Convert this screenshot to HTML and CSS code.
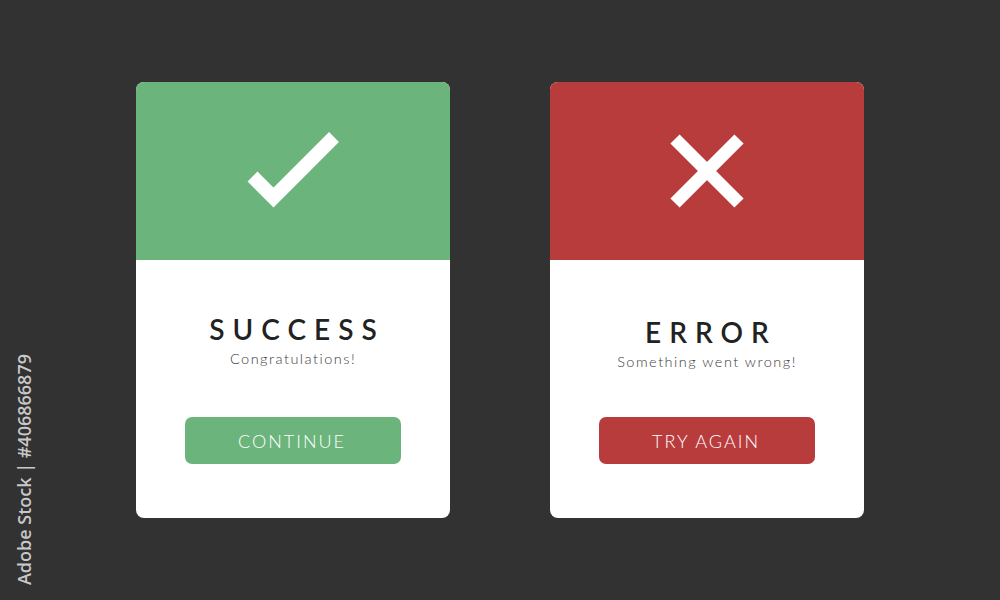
FILE: index.html
```html
<!DOCTYPE html>
<html lang="en">
<head>
    <meta charset="UTF-8">
    <meta name="viewport" content="width=device-width, initial-scale=1.0">
    <title>Alerts</title>

    <link rel="stylesheet" href="styles.css">
</head>
<body>
    <!-- tarjetas -->

    <div class="alerts">
        <div class="card">
            <div class="cardHeader success">
                <svg class="icon" width="100" height="100" viewBox="0 0 100 100">
                    <polyline points="9.5,55.5 30.5,76.5 91,16" fill="none" stroke="#fff" stroke-width="14" stroke-linejoin="miter"/>
                </svg>
            </div>
            <div class="cardBody">
                <h2 class="title">SUCCESS</h2>
                <p class="message">Congratulations!</p>
                <button class="btn successBtn">CONTINUE</button>
            </div>
        </div>

        <div class="card">
            <div class="cardHeader error">
                <svg class="icon" width="100" height="100" viewBox="0 0 100 100">
                    <line x1="18" y1="18" x2="82" y2="82" stroke="#fff" stroke-width="13"/>
                    <line x1="82" y1="18" x2="18" y2="82" stroke="#fff" stroke-width="13"/>
                </svg>
            </div>
            <div class="cardBody">
                <h2 class="title errorTitle">ERROR</h2>
                <p class="message">Something went wrong!</p>
                <button class="btn errorBtn">TRY AGAIN</button>
            </div>
        </div>
    </div>

    <div class="stockId">Adobe Stock | #406866879</div>
</body>
</html>
```

FILE: styles.css
```css
body {
    margin: 0;
    height: 600px;
    background-color: #323232;
    font-family: Lato, "Open Sans", sans-serif;
    overflow: hidden;
}

.alerts {
    display: flex;
    justify-content: center;
    align-items: center;
    gap: 100px;
    height: 100%;
}

.card {
    width: 314px;
    height: 436px;
    background-color: white;
    border-radius: 8px;
    overflow: hidden;
    display: flex;
    flex-direction: column;
}

.cardHeader {
    height: 178px;
    display: flex;
    justify-content: center;
    align-items: center;
}

.success {
    background-color: #6bb57c;
}

.error {
    background-color: #b93c3d;
}

.cardBody {
    display: flex;
    flex-direction: column;
    align-items: center;
    padding-top: 52px;
}

.title {
    margin: 0;
    font-size: 28px;
    line-height: 34px;
    font-weight: 600;
    letter-spacing: 8px;
    padding-left: 8px;
    color: #222;
}

.errorTitle {
    margin-top: 3px;
}

.message {
    margin: 4px 0 0;
    font-size: 14.5px;
    line-height: 18px;
    font-weight: 300;
    letter-spacing: 1.5px;
    color: #3a3a3a;
}

.btn {
    margin-top: 49px;
    width: 216px;
    height: 47px;
    border: none;
    border-radius: 7px;
    color: white;
    font-family: Lato, "Open Sans", sans-serif;
    font-size: 18px;
    font-weight: 300;
    letter-spacing: 2px;
    padding-left: 4px;
    cursor: pointer;
}

.successBtn {
    background-color: #6bb57c;
}

.errorBtn {
    margin-top: 46px;
    background-color: #b93c3d;
}

.stockId {
    position: absolute;
    left: 12px;
    bottom: 15px;
    writing-mode: vertical-rl;
    transform: rotate(180deg);
    font-family: "Open Sans", sans-serif;
    font-size: 18px;
    font-weight: 600;
    color: #c8c8c8;
}
```
